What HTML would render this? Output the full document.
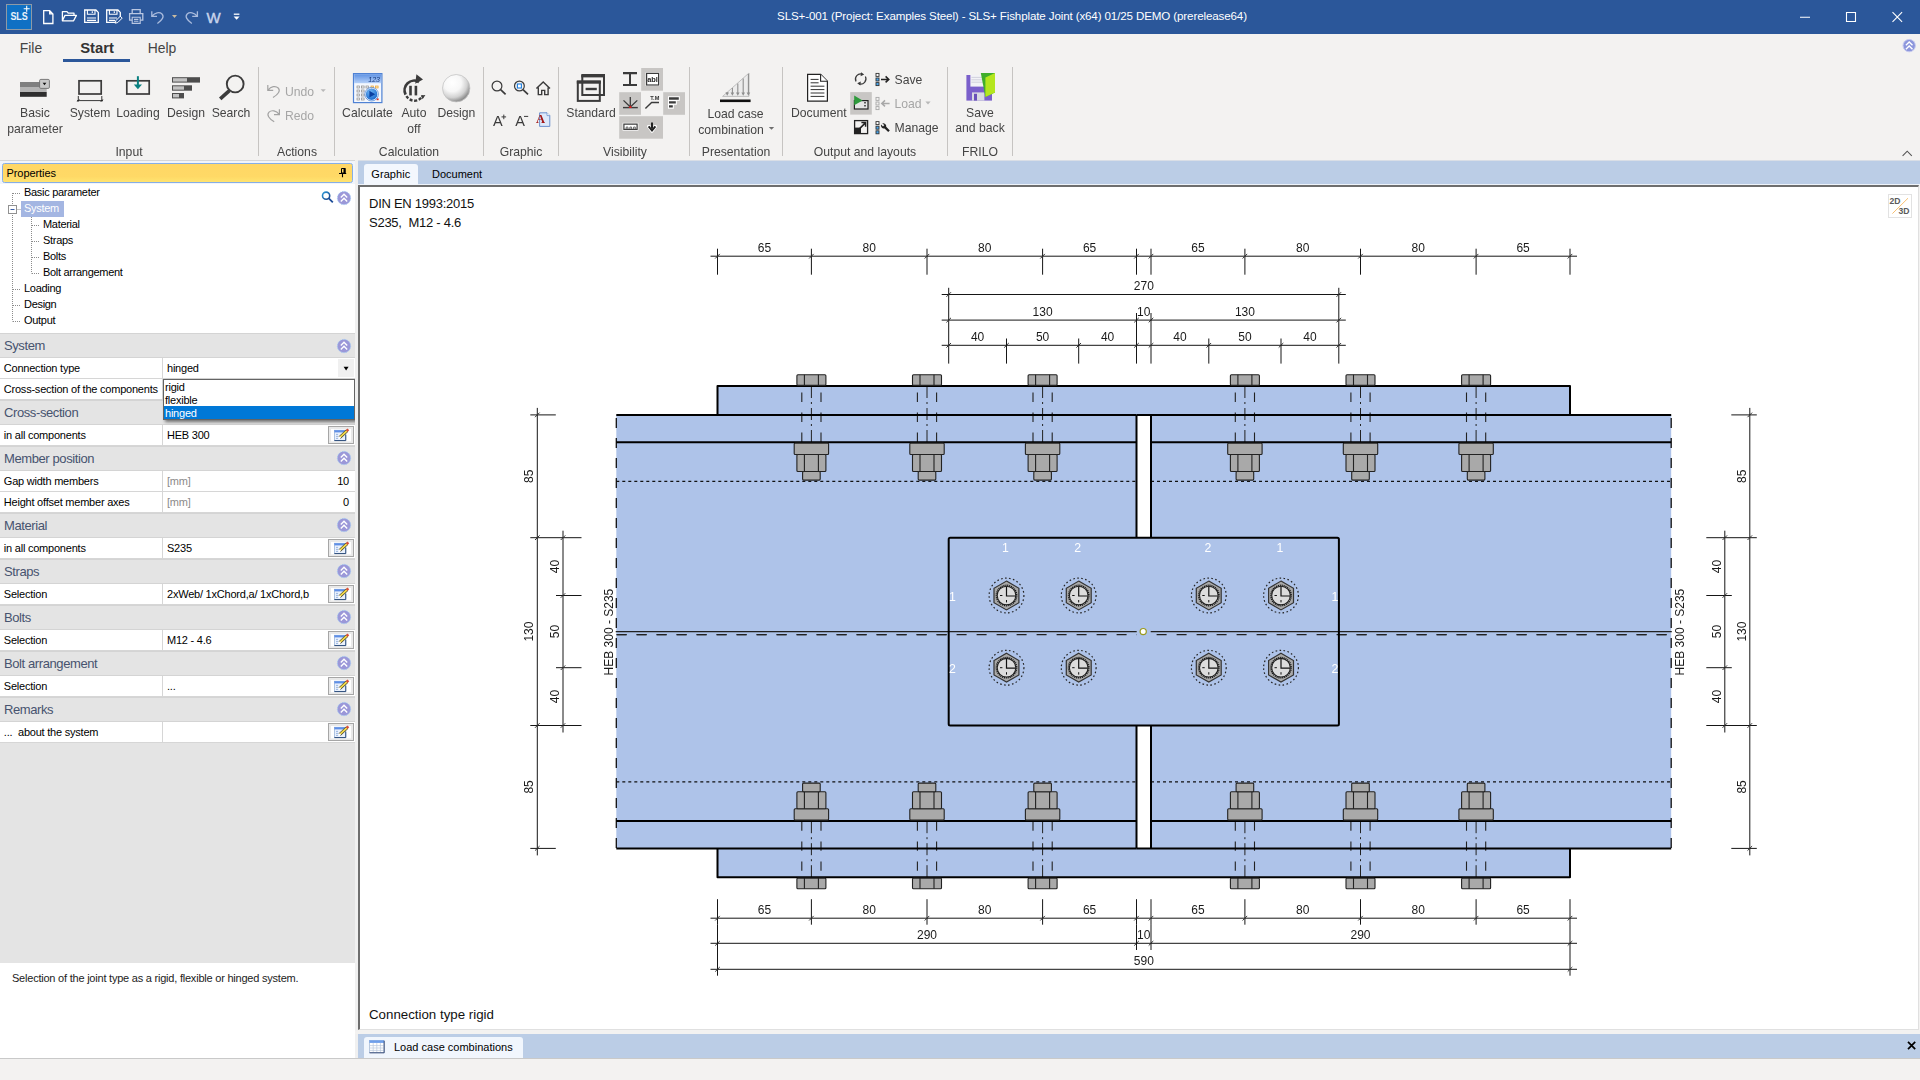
<!DOCTYPE html><html><head><meta charset="utf-8"><title>SLS+ Fishplate Joint</title><style>
*{box-sizing:border-box;margin:0;padding:0}
html,body{width:1920px;height:1080px;overflow:hidden;background:#F3F2F1;font-family:"Liberation Sans",sans-serif;font-size:12px;color:#000}
.abs{position:absolute}
#title{position:absolute;left:0;top:0;width:1920px;height:34px;background:#2B579A}
#title .t{position:absolute;left:0;width:2024px;top:8.5px;text-align:center;color:#fff;font-size:11.6px;letter-spacing:-0.13px;white-space:nowrap}
#ribbon{position:absolute;left:0;top:34px;width:1920px;height:126px;background:#F3F2F1}
.tab{position:absolute;top:4.6px;height:20px;font-size:13.9px;color:#444;text-align:center;white-space:nowrap;line-height:18px}
.lbl{position:absolute;font-size:12.2px;color:#444;text-align:center;white-space:nowrap;line-height:16px;transform:translateX(-50%)}
.glbl{position:absolute;top:110.4px;font-size:12.2px;color:#444;white-space:nowrap;line-height:16px;transform:translateX(-50%)}
.sep{position:absolute;top:33px;width:1px;height:89px;background:#C6C4C2}
.slbl{position:absolute;font-size:12.2px;color:#444;white-space:nowrap;line-height:16px}
.hl{position:absolute;background:#C8C6C4;width:22px;height:23px}
#left{position:absolute;left:0;top:160px;width:355px;height:898px;background:#E4E4E4}
#band{position:absolute;left:358px;top:160px;width:1562px;height:24px;background:#BBCDE6;border-top:1px solid #D9DEE6}
.tree{position:absolute;font-size:11px;line-height:16px;white-space:nowrap;letter-spacing:-0.3px}
.hdr{position:absolute;left:0;width:355px;height:25px;background:#E4E4E4;border-top:1px solid #D4D4D4;border-bottom:1px solid #D4D4D4;font-size:13px;letter-spacing:-0.4px;color:#47536F;line-height:23px;padding-left:4px}
.row{position:absolute;left:0;width:355px;height:21px;background:#fff;border-bottom:1px solid #D6D6D6;font-size:11px;line-height:21px;white-space:nowrap;letter-spacing:-0.22px}
.row .l{position:absolute;left:3.8px;top:0}
.row .v{position:absolute;left:167px;top:0}
.row .u{position:absolute;left:167px;top:0;color:#8A8A8A}
.row .n{position:absolute;right:6px;top:0}
.row .d{position:absolute;left:162px;top:0;width:1px;height:21px;background:#D6D6D6}
.btn{position:absolute;left:328px;top:1.5px;width:26px;height:18px;border:1px solid #A6A6A6;background:#E9E9E9}
</style></head><body>
<div id="title">
<svg class="abs" style="left:0;top:0" width="250" height="34" viewBox="0 0 250 34">
<rect x="6.5" y="4.5" width="25" height="25" fill="#0F70C4" stroke="#8E9AA6" stroke-width="1"/>
<text x="10.4" y="20.4" font-family="Liberation Sans, sans-serif" font-size="10.5" font-weight="bold" fill="#EAF2FA" textLength="17.4" lengthAdjust="spacingAndGlyphs">SLS</text>
<path d="M26.7 5.8v6M23.7 8.8h6" stroke="#fff" stroke-width="1.1"/>
<path d="M43.7 10.7h6l3.2 3.2v9.6h-9.2zM49.7 10.7v3.2h3.2" fill="none" stroke="#fff" stroke-width="1.3"/>
<path d="M62.4 20.8v-9.2h4.6l1.4 1.6h5.6v2.2M62.4 20.8l2.6-5.4h11.4l-2.8 5.4z" fill="none" stroke="#fff" stroke-width="1.3" stroke-linejoin="round"/>
<g fill="none" stroke="#fff" stroke-width="1.3"><path d="M84.7 10h11.2l2.4 2.4v9.9h-13.6z"/><path d="M87.4 10v4.2h7.6v-4.2M92.3 11.2v1.8M87 18h9M87 20.4h9" stroke-width="1.1"/></g>
<g fill="none" stroke="#fff" stroke-width="1.3"><path d="M115.5 22.3h-8.8v-12.3h11.2l2.4 2.4v4.6"/><path d="M109.4 10v4.2h7.6v-4.2M114.3 11.2v1.8M109 18h8M109 20.4h6" stroke-width="1.1"/><path d="M115.2 23.2l0.7-2.6 4.4-4.4 1.9 1.9-4.4 4.4z" stroke-width="1"/></g>
<g fill="none" stroke="#B9C7E2" stroke-width="1.3"><path d="M132.2 13.6v-4h8v4M132.2 20.2h-2.6v-6.6h13.2v6.6h-2.6"/><path d="M132.2 17.2h8v6.2h-8zM134 19.4h4.4M134 21.2h4.4" stroke-width="1.1"/></g>
<path d="M151.8 11.2v5.2h5.2M152 16.2c3-3.6 7.4-4.6 10-2.2c2.6 2.6 0.2 6-4.6 9.6" fill="none" stroke="#A9BBDD" stroke-width="1.3"/>
<path d="M172 15h5l-2.5 3z" fill="#C9BBA0"/>
<path d="M197.4 11.2v5.2h-5.2M197.2 16.2c-3-3.6-7.4-4.6-10-2.2c-2.6 2.6-0.2 6 4.6 9.6" fill="none" stroke="#A9BBDD" stroke-width="1.3"/>
<text x="213.6" y="22.6" font-family="Liberation Sans, sans-serif" font-size="15" fill="#C8D4EC" text-anchor="middle" stroke="#C8D4EC" stroke-width="0.4">W</text>
<path d="M233.8 14.2h5.6" stroke="#fff" stroke-width="1.3"/><path d="M233.6 16.4h6l-3 3.4z" fill="#fff"/>
</svg>
<svg class="abs" style="left:1790px;top:0" width="130" height="34" viewBox="0 0 130 34">
<path d="M10 17.2h10M56.5 12.5h9v9h-9zM102.5 12.2l9.6 9.6M112.1 12.2l-9.6 9.6" fill="none" stroke="#fff" stroke-width="1.1"/>
</svg>
<div class="t">SLS+-001 (Project: Examples Steel) - SLS+ Fishplate Joint (x64) 01/25 DEMO (prerelease64)</div>
</div>
<div id="ribbon">
<div class="tab" style="left:11px;width:40px">File</div>
<div class="tab" style="left:67px;width:60px;font-weight:bold;color:#333;font-size:14.8px">Start</div>
<div class="abs" style="left:63px;top:25px;width:67px;height:3px;background:#2B579A"></div>
<div class="tab" style="left:137px;width:50px">Help</div>
<svg class="abs" style="left:0;top:0;will-change:transform" width="1920" height="126" viewBox="0 34 1920 126">
<!-- highlight boxes -->
<g fill="#C8C6C4"><rect x="641.2" y="68" width="21.8" height="22.7"/><rect x="619.2" y="92.2" width="21.8" height="22.6"/><rect x="663.2" y="92.2" width="21.8" height="22.6"/><rect x="619.2" y="116.2" width="43.8" height="22.5"/><rect x="850.2" y="92.1" width="21.6" height="22.5"/></g>
<!-- Basic parameter -->
<rect x="20" y="82" width="26.7" height="5" fill="#7F7F7F"/><rect x="20" y="87" width="26.7" height="5" fill="#B4B4B4"/><rect x="20" y="92" width="26.7" height="4.8" fill="#2E2E2E"/>
<rect x="39.6" y="79.4" width="9.8" height="9" rx="1.2" fill="#C9C9C9" stroke="#6E6E6E" stroke-width="0.9"/><path d="M42.6 82.8h3.8l-1.9 2.4z" fill="#111"/>
<!-- System -->
<rect x="79" y="80.8" width="22.2" height="13.2" fill="none" stroke="#3B3B3B" stroke-width="1.7"/>
<path d="M77 100.6h26M78.3 96v5.6M101.8 96v5.6" stroke="#222" stroke-width="0.9" fill="none"/><path d="M77.2 101.6l2.2-2.2M100.7 101.6l2.2-2.2" stroke="#222" stroke-width="0.9"/>
<!-- Loading -->
<rect x="126.8" y="80.8" width="22.4" height="13.2" fill="none" stroke="#3B3B3B" stroke-width="1.7"/>
<path d="M137.9 76.2v9" stroke="#0A8080" stroke-width="2"/><path d="M133.8 84.6h8.2l-4.1 4.6z" fill="#0A8080"/>
<!-- Design bars -->
<rect x="172" y="77.2" width="28" height="5.4" fill="#4D4D4D"/><rect x="173" y="78.2" width="14" height="3.4" fill="#C2C2C2"/>
<rect x="172" y="85.3" width="20" height="5.4" fill="#4D4D4D"/><rect x="173" y="86.3" width="11" height="3.4" fill="#C2C2C2"/>
<rect x="172" y="93" width="12" height="5.4" fill="#4D4D4D"/><rect x="173" y="94" width="6" height="3.4" fill="#C2C2C2"/>
<!-- Search -->
<circle cx="235.2" cy="84" r="8.4" fill="none" stroke="#3B3B3B" stroke-width="1.9"/><path d="M229.4 90.6l-9.2 8.2" stroke="#3B3B3B" stroke-width="3.6"/>
<!-- Undo / Redo (disabled) -->
<g fill="none" stroke="#A3A3A3" stroke-width="1.2"><path d="M267.8 85v5.4h5.4M268 90.2c3-3.8 7.6-4.8 10.2-2.2c2.6 2.6 0.2 6.2-5.2 9.6"/><path d="M279.4 109.2v5.4h-5.4M279.2 114.4c-3-3.8-7.6-4.8-10.2-2.2c-2.6 2.6-0.2 6.2 5.2 9.6"/></g>
<path d="M320.6 89.3h5.2l-2.6 2.8z" fill="#B8B8B8"/>
<!-- Calculate -->
<defs><linearGradient id="gc" x1="0" y1="0" x2="0" y2="1"><stop offset="0" stop-color="#5F93E4"/><stop offset="1" stop-color="#B5D0F8"/></linearGradient>
<radialGradient id="gb" cx="0.36" cy="0.3" r="0.72"><stop offset="0" stop-color="#FFFFFF"/><stop offset="0.45" stop-color="#F7F7F7"/><stop offset="0.75" stop-color="#D2D2D2"/><stop offset="1" stop-color="#868686"/></radialGradient>
<radialGradient id="gp" cx="0.4" cy="0.3" r="0.8"><stop offset="0" stop-color="#6DB4F4"/><stop offset="1" stop-color="#0E5FC8"/></radialGradient></defs>
<rect x="353.5" y="73.6" width="28.4" height="29" fill="#F4F8FE" stroke="#4F82D4" stroke-width="1.2"/>
<rect x="354.2" y="74.2" width="27" height="9" fill="url(#gc)"/>
<text x="380" y="82" font-family="Liberation Sans, sans-serif" font-size="7" font-style="italic" fill="#14387C" text-anchor="end">123</text>
<g fill="#F8F8F8" stroke="#8C8C8C" stroke-width="0.7"><rect x="357" y="86" width="2.6" height="2"/><rect x="361.5" y="86" width="2.6" height="2"/><rect x="366" y="86" width="2.6" height="2"/><rect x="357" y="90" width="2.6" height="2"/><rect x="361.5" y="90" width="2.6" height="2"/><rect x="357" y="94" width="2.6" height="2"/><rect x="361.5" y="94" width="2.6" height="2"/><rect x="357" y="98" width="2.6" height="2"/><rect x="361.5" y="98" width="2.6" height="2"/></g>
<g fill="#FFE9B0" stroke="#E8A030" stroke-width="0.7"><rect x="371" y="86" width="2.6" height="2"/><rect x="375.5" y="86" width="2.6" height="2"/></g><rect x="376.6" y="98.4" width="2" height="1.8" fill="#E0341C"/>
<circle cx="371.6" cy="94.2" r="6.2" fill="url(#gp)" stroke="#EAF2FE" stroke-width="1"/><circle cx="371.6" cy="94.2" r="6.8" fill="none" stroke="#2A6AC8" stroke-width="0.6"/><path d="M369.4 90.8v6.8l5.8-3.4z" fill="#0A3FA0"/>
<!-- Auto off -->
<path d="M405.6 94.6a9.6 9.6 0 0 1 13.4 -12.6" fill="none" stroke="#3B3B3B" stroke-width="2.7"/><path d="M416.4 74.2l6.6 5.4l-7.8 4.2z" fill="#3B3B3B"/>
<path d="M406.4 96.2a9.6 9.6 0 0 0 16.6 -0.6" fill="none" stroke="#3B3B3B" stroke-width="2.4" stroke-dasharray="3 1.6"/><path d="M420.8 95.6l4.6-0.6l-2.8 4.2z" fill="#3B3B3B"/>
<rect x="409.2" y="85.8" width="2.6" height="9.6" fill="#3B3B3B"/><rect x="414.6" y="85.8" width="2.6" height="9.6" fill="#3B3B3B"/>
<!-- Design ball -->
<circle cx="456.2" cy="88.2" r="13.7" fill="url(#gb)" stroke="#C4C4C4" stroke-width="0.8"/>
<!-- Graphic small -->
<g fill="none" stroke="#3B3B3B" stroke-width="1.2"><circle cx="497" cy="86" r="4.9"/><path d="M500.6 89.6l5 4.8" stroke-width="1.7"/><circle cx="519.4" cy="86" r="4.9"/><path d="M523 89.6l5 4.8" stroke-width="1.7"/>
<path d="M536.4 88.6l6.8-6.6l6.8 6.6M538.3 87.4v7.2h3.4v-4.2h3v4.2h3.4v-7.2" stroke-width="1.4"/></g>
<rect x="517.4" y="84" width="4" height="4" fill="#fff" stroke="#1E7FE0" stroke-width="1.1"/>
<text x="493" y="125.6" font-family="Liberation Sans, sans-serif" font-size="14.5" fill="#3B3B3B">A</text><path d="M503.8 114.6v4.6M501.5 116.9h4.6" stroke="#3B3B3B" stroke-width="1"/>
<text x="515.2" y="125.6" font-family="Liberation Sans, sans-serif" font-size="14.5" fill="#3B3B3B">A</text><path d="M524 116.4h4.2" stroke="#3B3B3B" stroke-width="1"/>
<path d="M539.6 112.8h7.4l2.8 2.8v10.8h-10.2z" fill="#DCE8FA" stroke="#5F86C8" stroke-width="0.9"/><path d="M547 112.8v2.8h2.8" fill="#fff" stroke="#5F86C8" stroke-width="0.7"/>
<text x="536" y="123" font-family="Liberation Serif, serif" font-size="12.5" font-weight="bold" fill="#A31515">A</text>
<!-- Standard -->
<g fill="none" stroke="#3B3B3B"><path d="M582.3 75v20h21.7v-20" stroke-width="2"/><path d="M581.3 75.7h23.7" stroke-width="3.4"/>
<rect x="577.8" y="82" width="22" height="18.9" stroke-width="2"/><path d="M576.8 82h24" stroke-width="3.4"/><path d="M585.6 89h11.2" stroke-width="2.4"/></g>
<!-- Visibility small -->
<g stroke="#3B3B3B" fill="none"><path d="M623 73.1h14M623 85h14" stroke-width="2.1"/><path d="M630 73v12" stroke-width="2"/>
<rect x="645.6" y="72.4" width="14" height="13.6" fill="#fff" stroke="none"/>
<rect x="646.6" y="73.4" width="12" height="11.6" stroke-width="1.2" fill="#fff"/>
<path d="M623 107.6h14.8" stroke-width="1.4"/><path d="M630.3 107v-10M630.3 107l-6.8-6.6M630.3 107l7-6.6" stroke-width="1.3"/>
<path d="M645.4 108.6l6.2-6.1h7.4" stroke-width="1.4"/>
<rect x="622.6" y="122.8" width="15.8" height="7.8" fill="#fff" stroke="none"/>
<path d="M623.9 124.1h13.2v5.2h-13.2z" stroke-width="1.2" fill="#fff"/><path d="M626.2 129v-2h1.7v2M629.9 129v-2h1.7v2M633.6 129v-2h1.7v2" stroke-width="0.7"/>
</g>
<path d="M628.6 107.9l1.7-2.6l1.7 2.6z" fill="#D81E1E"/>
<text x="652.6" y="82.3" font-family="Liberation Sans, sans-serif" font-size="7.4" font-weight="bold" fill="#222" text-anchor="middle">abl</text>
<text x="654.8" y="100.2" font-family="Liberation Sans, sans-serif" font-size="5.6" font-weight="bold" fill="#333" text-anchor="middle">T.M</text>
<path d="M668 96.3h11.8v4.4h-3v4h-3v4h-5.8z" fill="#fff"/>
<path d="M669 97.3h9.8v2.4h-9.8zM669 101.3h6.8v2.3h-6.8zM669 105.3h3.8v2.3h-3.8z" fill="#3B3B3B"/>
<path d="M652 122.2v6M648.4 126.4l3.6 5l3.6-5z" stroke="#fff" stroke-width="2.8" fill="#fff" stroke-linejoin="round"/><path d="M652 122.4v6.4" stroke="#222" stroke-width="2.3"/><path d="M648.6 126.4l3.4 4.2l3.4-4.2" fill="none" stroke="#222" stroke-width="1.9"/>
<!-- Load case combination -->
<path d="M722.6 96.4l26.4-23.4v23.4z" fill="#ECECEC" stroke="#B9B9B9" stroke-width="0.9"/>
<g stroke="#8E8E8E" stroke-width="1.1"><path d="M727.2 93v-1M732.4 93v-5M737.8 93v-9.6M743.2 93v-14.4M748.4 93v-19"/></g>
<g fill="#8E8E8E"><path d="M725.4 92.4h3.6l-1.8 3.4zM730.6 92.4h3.6l-1.8 3.4zM736 92.4h3.6l-1.8 3.4zM741.4 92.4h3.6l-1.8 3.4zM746.6 92.4h3.6l-1.8 3.4z"/></g>
<path d="M720 100.8h30.6" stroke="#111" stroke-width="2.6"/>
<path d="M768.8 127h5.4l-2.7 2.8z" fill="#6E6E6E"/>
<!-- Document -->
<path d="M807.6 74.4h13l6.8 6.8v20h-19.8z" fill="#fff" stroke="#222" stroke-width="1.2"/><path d="M820.6 74.4v6.8h6.8" fill="#fff" stroke="#222" stroke-width="1.1"/>
<path d="M810.6 79.4h8M810.6 82.8h8M810.6 86.2h13.8M810.6 89.6h13.8M810.6 93h13.8M810.6 96.4h13.8" stroke="#333" stroke-width="1"/>
<!-- output small icons -->
<g fill="none" stroke="#3B3B3B" stroke-width="1.2"><path d="M856 81.4a5.2 5.2 0 0 1 6.4-7.2M865.4 76.6a5.2 5.2 0 0 1-6.4 7.2"/></g><path d="M861 72.2l3.2 2.4l-3.6 1.6zM860.4 85.6l-3.2-2.4l3.6-1.6z" fill="#3B3B3B"/>
<rect x="854.4" y="100.6" width="13.6" height="8.4" fill="#E4E4E4" stroke="#222" stroke-width="1.2"/><path d="M865 102v1.4M865 105v1.4" stroke="#222" stroke-width="1.4"/><path d="M854.2 95.6v9.6l8.4-4.8z" fill="#2E9A3C"/>
<rect x="854.6" y="120.6" width="13" height="13" fill="none" stroke="#222" stroke-width="1.3"/><rect x="854.6" y="127.6" width="6.4" height="6" fill="#222"/><path d="M859.6 128.6l6-6M861.4 122.6h4.2v4.2" fill="none" stroke="#222" stroke-width="1.5"/>
<g stroke="#333" stroke-width="0.9"><rect x="876" y="73.4" width="3" height="3" fill="#fff"/><rect x="876" y="78" width="3" height="3" fill="#49A8F0"/><rect x="876" y="82.6" width="3" height="3" fill="#49A8F0"/>
<rect x="876" y="121.6" width="3" height="3" fill="#fff"/><rect x="876" y="126.2" width="3" height="3" fill="#49A8F0"/><rect x="876" y="130.8" width="3" height="3" fill="#49A8F0"/></g>
<g stroke="#A8A8A8" stroke-width="0.9" fill="#F3F2F1"><rect x="876" y="97.4" width="3" height="3"/><rect x="876" y="102" width="3" height="3"/><rect x="876" y="106.6" width="3" height="3"/></g>
<path d="M881 79.4h7.6M885.6 76.4l3.2 3l-3.2 3" fill="none" stroke="#222" stroke-width="1.5"/>
<path d="M882 103.4h7.6M885 100.4l-3.2 3l3.2 3" fill="none" stroke="#A8A8A8" stroke-width="1.5"/>
<path d="M925.4 101.6h5.2l-2.6 2.8z" fill="#B8B8B8"/>
<path d="M882.2 123.4a3 3 0 0 1 4 3.4l3.6 3.6l-1.6 1.6l-3.6-3.6a3 3 0 0 1-3.6-3.8l2 1.8l1.4-1.4z" fill="#222"/>
<!-- Save and back -->
<path d="M966.4 75h25.6v25.6h-25.6z" fill="#7A5FCB"/><rect x="970.4" y="75" width="16" height="11.6" fill="#F2F2F6"/><path d="M971.4 77.4h14M971.4 79.8h14M971.4 82.2h14" stroke="#C9C9D6" stroke-width="0.8"/>
<rect x="972" y="92.4" width="12.4" height="8.2" fill="#D9D9E2"/><rect x="974" y="93.8" width="3" height="6.8" fill="#6A50B8"/>
<path d="M980.8 73h14.2v19.4l-9.6 4.6z" fill="#3FAE2A"/><path d="M985.4 77.4l9.6-4.4v19.4l-9.6 4.6z" fill="#B4E61E"/>
<!-- collapse caret / help -->
<path d="M1902.6 155.8l4.6-4.6l4.6 4.6" fill="none" stroke="#555" stroke-width="1.1"/>
<circle cx="1909.2" cy="45.6" r="6.2" fill="#8C96DC" stroke="#C4C8EE" stroke-width="1"/><path d="M1905.9 45.2l3.3-3.3l3.3 3.3M1905.9 49.2l3.3-3.3l3.3 3.3" fill="none" stroke="#fff" stroke-width="1.4"/>
</svg>
<div class="lbl" style="left:35px;top:71px;color:#444">Basic</div>
<div class="lbl" style="left:35px;top:86.5px;color:#444">parameter</div>
<div class="lbl" style="left:90px;top:71px;color:#444">System</div>
<div class="lbl" style="left:138px;top:71px;color:#444">Loading</div>
<div class="lbl" style="left:186px;top:71px;color:#444">Design</div>
<div class="lbl" style="left:231px;top:71px;color:#444">Search</div>
<div class="lbl" style="left:367.5px;top:71px;color:#444">Calculate</div>
<div class="lbl" style="left:414px;top:71px;color:#444">Auto</div>
<div class="lbl" style="left:414px;top:86.5px;color:#444">off</div>
<div class="lbl" style="left:456.4px;top:71px;color:#444">Design</div>
<div class="lbl" style="left:591px;top:71px;color:#444">Standard</div>
<div class="lbl" style="left:735.5px;top:71.6px;color:#444">Load case</div>
<div class="lbl" style="left:731px;top:87.5px;color:#444">combination</div>
<div class="lbl" style="left:818.8px;top:70.8px;color:#444">Document</div>
<div class="lbl" style="left:980px;top:70.5px;color:#444">Save</div>
<div class="lbl" style="left:980px;top:86.3px;color:#444">and back</div>
<div class="glbl" style="left:129px">Input</div>
<div class="glbl" style="left:297px">Actions</div>
<div class="glbl" style="left:409px">Calculation</div>
<div class="glbl" style="left:521px">Graphic</div>
<div class="glbl" style="left:625px">Visibility</div>
<div class="glbl" style="left:736px">Presentation</div>
<div class="glbl" style="left:865px">Output and layouts</div>
<div class="glbl" style="left:980px">FRILO</div>
<div class="sep" style="left:258px"></div>
<div class="sep" style="left:334px"></div>
<div class="sep" style="left:483px"></div>
<div class="sep" style="left:558px"></div>
<div class="sep" style="left:689px"></div>
<div class="sep" style="left:782px"></div>
<div class="sep" style="left:947px"></div>
<div class="sep" style="left:1012px"></div>
<div class="slbl" style="left:285px;top:49.7px;color:#A6A6A6">Undo</div>
<div class="slbl" style="left:285px;top:73.5px;color:#A6A6A6">Redo</div>
<div class="slbl" style="left:894.5px;top:37.5px">Save</div>
<div class="slbl" style="left:894.5px;top:61.8px;color:#A6A6A6">Load</div>
<div class="slbl" style="left:894.5px;top:85.8px">Manage</div>
</div>
<div id="left">
<div class="abs" style="left:0;top:0;width:355px;height:24px;background:#F1F5FB;border-top:1px solid #D6D6D6"></div>
<div class="abs" style="left:2px;top:3px;width:351px;height:20px;background:linear-gradient(#FFD765,#FFD966 70%,#FFE470);border:1px solid #86AEE6;border-radius:2.5px;font-size:11px;line-height:18px;padding-left:3.5px;letter-spacing:-0.07px">Properties</div>
<div class="abs" style="left:0;top:24px;width:355px;height:149px;background:#fff"></div>
<svg class="abs" style="left:0;top:0" width="355" height="180" viewBox="0 160 355 180"><path d="M12.5 193V321.5" stroke="#8C8C8C" stroke-width="1" stroke-dasharray="1 1" fill="none"/><path d="M13 193.5H21" stroke="#8C8C8C" stroke-width="1" stroke-dasharray="1 1" fill="none"/><path d="M13 289.5H21" stroke="#8C8C8C" stroke-width="1" stroke-dasharray="1 1" fill="none"/><path d="M13 305.5H21" stroke="#8C8C8C" stroke-width="1" stroke-dasharray="1 1" fill="none"/><path d="M13 321.5H21" stroke="#8C8C8C" stroke-width="1" stroke-dasharray="1 1" fill="none"/><path d="M16.5 209.5H21" stroke="#8C8C8C" stroke-width="1" stroke-dasharray="1 1" fill="none"/><path d="M31.5 217V273.5" stroke="#8C8C8C" stroke-width="1" stroke-dasharray="1 1" fill="none"/><path d="M32 225.5H40" stroke="#8C8C8C" stroke-width="1" stroke-dasharray="1 1" fill="none"/><path d="M32 241.5H40" stroke="#8C8C8C" stroke-width="1" stroke-dasharray="1 1" fill="none"/><path d="M32 257.5H40" stroke="#8C8C8C" stroke-width="1" stroke-dasharray="1 1" fill="none"/><path d="M32 273.5H40" stroke="#8C8C8C" stroke-width="1" stroke-dasharray="1 1" fill="none"/><rect x="8.5" y="205.5" width="8" height="8" fill="#fff" stroke="#919191" stroke-width="1"/><path d="M10.5 209.5h4" stroke="#3A5FA8" stroke-width="1"/></svg>
<div class="tree" style="left:24px;top:24px">Basic parameter</div>
<div class="abs" style="left:21px;top:41.3px;width:42.7px;height:15.4px;background:#A4B6E2"></div>
<div class="tree" style="left:24px;top:40px;color:#fff">System</div>
<div class="tree" style="left:43px;top:56px">Material</div>
<div class="tree" style="left:43px;top:72px">Straps</div>
<div class="tree" style="left:43px;top:88px">Bolts</div>
<div class="tree" style="left:43px;top:104px">Bolt arrangement</div>
<div class="tree" style="left:24px;top:120px">Loading</div>
<div class="tree" style="left:24px;top:136px">Design</div>
<div class="tree" style="left:24px;top:152px">Output</div>
<svg class="abs" style="left:300px;top:0" width="55" height="50" viewBox="300 160 55 50">
<path d="M341.5 168.5h3.5v4.5h-3.5z" fill="none" stroke="#000" stroke-width="1"/><path d="M344.5 168v5" stroke="#000" stroke-width="2"/><path d="M339 173.5h7.2M342.5 174v3.2" stroke="#000" stroke-width="1.1"/>
<defs><linearGradient id="gs" x1="0" y1="0" x2="1" y2="1"><stop offset="0" stop-color="#2E9AD8"/><stop offset="1" stop-color="#173F86"/></linearGradient></defs>
<circle cx="326.1" cy="195.7" r="3.6" fill="#fff" stroke="url(#gs)" stroke-width="1.6"/><path d="M328.8 198.4l4 4" stroke="#1C4C98" stroke-width="1.8"/>
</svg>
<svg class="abs" style="left:336px;top:30px" width="16" height="16" viewBox="-8 -8 16 16"><circle r="6.6" fill="#9B97D8" stroke="#9CC2F2" stroke-width="1" stroke-dasharray="1.4 1"/><path d="M-3.2 -0.5L0 -3.7L3.2 -0.5M-3.2 3.5L0 0.3L3.2 3.5" fill="none" stroke="#fff" stroke-width="1.4"/></svg>
<div class="hdr" style="top:173px">System</div>
<svg class="abs" style="left:336px;top:177.5px" width="16" height="16" viewBox="-8 -8 16 16"><circle r="6.6" fill="#9B97D8" stroke="#9CC2F2" stroke-width="1" stroke-dasharray="1.4 1"/><path d="M-3.2 -0.5L0 -3.7L3.2 -0.5M-3.2 3.5L0 0.3L3.2 3.5" fill="none" stroke="#fff" stroke-width="1.4"/></svg>
<div class="row" style="top:198px"><span class="l">Connection type</span><span class="d"></span><span class="v">hinged</span></div>
<div class="row" style="top:219px"><span class="l">Cross-section of the components</span><span class="d"></span><span class="v"></span></div>
<div class="hdr" style="top:239.5px">Cross-section</div>
<svg class="abs" style="left:336px;top:244.0px" width="16" height="16" viewBox="-8 -8 16 16"><circle r="6.6" fill="#9B97D8" stroke="#9CC2F2" stroke-width="1" stroke-dasharray="1.4 1"/><path d="M-3.2 -0.5L0 -3.7L3.2 -0.5M-3.2 3.5L0 0.3L3.2 3.5" fill="none" stroke="#fff" stroke-width="1.4"/></svg>
<div class="row" style="top:264.5px"><span class="l">in all components</span><span class="d"></span><span class="v">HEB 300</span><span class="btn"><svg style="position:absolute;left:0;top:0" width="24" height="16" viewBox="329 427 24 16"><rect x="329" y="427" width="24" height="16" fill="#E9E9E9"/><rect x="331" y="429" width="20" height="12.4" fill="#fff"/><rect x="334.4" y="430.2" width="11.2" height="10.4" fill="#EAF1FC" stroke="#7F9FD0" stroke-width="0.6"/><rect x="334.4" y="430.2" width="11.2" height="2.2" fill="#5F8FE6"/><path d="M334.4 440.6h11.4v-6" fill="none" stroke="#2B4A78" stroke-width="1"/><path d="M336 434.4h2M336 436.4h2M336 438.4h2" stroke="#86A6DA" stroke-width="0.8"/><path d="M339.6 437.6l7.6-7" stroke="#3A3A2A" stroke-width="3"/><path d="M339.8 437.4l7.2-6.6" stroke="#F2D84A" stroke-width="1.9"/><path d="M346.6 431l1.8-1.6" stroke="#D8503A" stroke-width="2.6"/><path d="M339 438.4l1.4-1.6" stroke="#fff" stroke-width="1.6"/></svg></span></div>
<div class="hdr" style="top:285.5px">Member position</div>
<svg class="abs" style="left:336px;top:290.0px" width="16" height="16" viewBox="-8 -8 16 16"><circle r="6.6" fill="#9B97D8" stroke="#9CC2F2" stroke-width="1" stroke-dasharray="1.4 1"/><path d="M-3.2 -0.5L0 -3.7L3.2 -0.5M-3.2 3.5L0 0.3L3.2 3.5" fill="none" stroke="#fff" stroke-width="1.4"/></svg>
<div class="row" style="top:310.5px"><span class="l">Gap width members</span><span class="d"></span><span class="u">[mm]</span><span class="n">10</span></div>
<div class="row" style="top:331.5px"><span class="l">Height offset member axes</span><span class="d"></span><span class="u">[mm]</span><span class="n">0</span></div>
<div class="hdr" style="top:352.5px">Material</div>
<svg class="abs" style="left:336px;top:357.0px" width="16" height="16" viewBox="-8 -8 16 16"><circle r="6.6" fill="#9B97D8" stroke="#9CC2F2" stroke-width="1" stroke-dasharray="1.4 1"/><path d="M-3.2 -0.5L0 -3.7L3.2 -0.5M-3.2 3.5L0 0.3L3.2 3.5" fill="none" stroke="#fff" stroke-width="1.4"/></svg>
<div class="row" style="top:377.5px"><span class="l">in all components</span><span class="d"></span><span class="v">S235</span><span class="btn"><svg style="position:absolute;left:0;top:0" width="24" height="16" viewBox="329 427 24 16"><rect x="329" y="427" width="24" height="16" fill="#E9E9E9"/><rect x="331" y="429" width="20" height="12.4" fill="#fff"/><rect x="334.4" y="430.2" width="11.2" height="10.4" fill="#EAF1FC" stroke="#7F9FD0" stroke-width="0.6"/><rect x="334.4" y="430.2" width="11.2" height="2.2" fill="#5F8FE6"/><path d="M334.4 440.6h11.4v-6" fill="none" stroke="#2B4A78" stroke-width="1"/><path d="M336 434.4h2M336 436.4h2M336 438.4h2" stroke="#86A6DA" stroke-width="0.8"/><path d="M339.6 437.6l7.6-7" stroke="#3A3A2A" stroke-width="3"/><path d="M339.8 437.4l7.2-6.6" stroke="#F2D84A" stroke-width="1.9"/><path d="M346.6 431l1.8-1.6" stroke="#D8503A" stroke-width="2.6"/><path d="M339 438.4l1.4-1.6" stroke="#fff" stroke-width="1.6"/></svg></span></div>
<div class="hdr" style="top:398.5px">Straps</div>
<svg class="abs" style="left:336px;top:403.0px" width="16" height="16" viewBox="-8 -8 16 16"><circle r="6.6" fill="#9B97D8" stroke="#9CC2F2" stroke-width="1" stroke-dasharray="1.4 1"/><path d="M-3.2 -0.5L0 -3.7L3.2 -0.5M-3.2 3.5L0 0.3L3.2 3.5" fill="none" stroke="#fff" stroke-width="1.4"/></svg>
<div class="row" style="top:423.5px"><span class="l">Selection</span><span class="d"></span><span class="v">2xWeb/ 1xChord,a/ 1xChord,b</span><span class="btn"><svg style="position:absolute;left:0;top:0" width="24" height="16" viewBox="329 427 24 16"><rect x="329" y="427" width="24" height="16" fill="#E9E9E9"/><rect x="331" y="429" width="20" height="12.4" fill="#fff"/><rect x="334.4" y="430.2" width="11.2" height="10.4" fill="#EAF1FC" stroke="#7F9FD0" stroke-width="0.6"/><rect x="334.4" y="430.2" width="11.2" height="2.2" fill="#5F8FE6"/><path d="M334.4 440.6h11.4v-6" fill="none" stroke="#2B4A78" stroke-width="1"/><path d="M336 434.4h2M336 436.4h2M336 438.4h2" stroke="#86A6DA" stroke-width="0.8"/><path d="M339.6 437.6l7.6-7" stroke="#3A3A2A" stroke-width="3"/><path d="M339.8 437.4l7.2-6.6" stroke="#F2D84A" stroke-width="1.9"/><path d="M346.6 431l1.8-1.6" stroke="#D8503A" stroke-width="2.6"/><path d="M339 438.4l1.4-1.6" stroke="#fff" stroke-width="1.6"/></svg></span></div>
<div class="hdr" style="top:444.5px">Bolts</div>
<svg class="abs" style="left:336px;top:449.0px" width="16" height="16" viewBox="-8 -8 16 16"><circle r="6.6" fill="#9B97D8" stroke="#9CC2F2" stroke-width="1" stroke-dasharray="1.4 1"/><path d="M-3.2 -0.5L0 -3.7L3.2 -0.5M-3.2 3.5L0 0.3L3.2 3.5" fill="none" stroke="#fff" stroke-width="1.4"/></svg>
<div class="row" style="top:469.5px"><span class="l">Selection</span><span class="d"></span><span class="v">M12 - 4.6</span><span class="btn"><svg style="position:absolute;left:0;top:0" width="24" height="16" viewBox="329 427 24 16"><rect x="329" y="427" width="24" height="16" fill="#E9E9E9"/><rect x="331" y="429" width="20" height="12.4" fill="#fff"/><rect x="334.4" y="430.2" width="11.2" height="10.4" fill="#EAF1FC" stroke="#7F9FD0" stroke-width="0.6"/><rect x="334.4" y="430.2" width="11.2" height="2.2" fill="#5F8FE6"/><path d="M334.4 440.6h11.4v-6" fill="none" stroke="#2B4A78" stroke-width="1"/><path d="M336 434.4h2M336 436.4h2M336 438.4h2" stroke="#86A6DA" stroke-width="0.8"/><path d="M339.6 437.6l7.6-7" stroke="#3A3A2A" stroke-width="3"/><path d="M339.8 437.4l7.2-6.6" stroke="#F2D84A" stroke-width="1.9"/><path d="M346.6 431l1.8-1.6" stroke="#D8503A" stroke-width="2.6"/><path d="M339 438.4l1.4-1.6" stroke="#fff" stroke-width="1.6"/></svg></span></div>
<div class="hdr" style="top:490.5px">Bolt arrangement</div>
<svg class="abs" style="left:336px;top:495.0px" width="16" height="16" viewBox="-8 -8 16 16"><circle r="6.6" fill="#9B97D8" stroke="#9CC2F2" stroke-width="1" stroke-dasharray="1.4 1"/><path d="M-3.2 -0.5L0 -3.7L3.2 -0.5M-3.2 3.5L0 0.3L3.2 3.5" fill="none" stroke="#fff" stroke-width="1.4"/></svg>
<div class="row" style="top:515.5px"><span class="l">Selection</span><span class="d"></span><span class="v">...</span><span class="btn"><svg style="position:absolute;left:0;top:0" width="24" height="16" viewBox="329 427 24 16"><rect x="329" y="427" width="24" height="16" fill="#E9E9E9"/><rect x="331" y="429" width="20" height="12.4" fill="#fff"/><rect x="334.4" y="430.2" width="11.2" height="10.4" fill="#EAF1FC" stroke="#7F9FD0" stroke-width="0.6"/><rect x="334.4" y="430.2" width="11.2" height="2.2" fill="#5F8FE6"/><path d="M334.4 440.6h11.4v-6" fill="none" stroke="#2B4A78" stroke-width="1"/><path d="M336 434.4h2M336 436.4h2M336 438.4h2" stroke="#86A6DA" stroke-width="0.8"/><path d="M339.6 437.6l7.6-7" stroke="#3A3A2A" stroke-width="3"/><path d="M339.8 437.4l7.2-6.6" stroke="#F2D84A" stroke-width="1.9"/><path d="M346.6 431l1.8-1.6" stroke="#D8503A" stroke-width="2.6"/><path d="M339 438.4l1.4-1.6" stroke="#fff" stroke-width="1.6"/></svg></span></div>
<div class="hdr" style="top:536.5px">Remarks</div>
<svg class="abs" style="left:336px;top:541.0px" width="16" height="16" viewBox="-8 -8 16 16"><circle r="6.6" fill="#9B97D8" stroke="#9CC2F2" stroke-width="1" stroke-dasharray="1.4 1"/><path d="M-3.2 -0.5L0 -3.7L3.2 -0.5M-3.2 3.5L0 0.3L3.2 3.5" fill="none" stroke="#fff" stroke-width="1.4"/></svg>
<div class="row" style="top:561.5px"><span class="l">...&nbsp; about the system</span><span class="d"></span><span class="v"></span><span class="btn"><svg style="position:absolute;left:0;top:0" width="24" height="16" viewBox="329 427 24 16"><rect x="329" y="427" width="24" height="16" fill="#E9E9E9"/><rect x="331" y="429" width="20" height="12.4" fill="#fff"/><rect x="334.4" y="430.2" width="11.2" height="10.4" fill="#EAF1FC" stroke="#7F9FD0" stroke-width="0.6"/><rect x="334.4" y="430.2" width="11.2" height="2.2" fill="#5F8FE6"/><path d="M334.4 440.6h11.4v-6" fill="none" stroke="#2B4A78" stroke-width="1"/><path d="M336 434.4h2M336 436.4h2M336 438.4h2" stroke="#86A6DA" stroke-width="0.8"/><path d="M339.6 437.6l7.6-7" stroke="#3A3A2A" stroke-width="3"/><path d="M339.8 437.4l7.2-6.6" stroke="#F2D84A" stroke-width="1.9"/><path d="M346.6 431l1.8-1.6" stroke="#D8503A" stroke-width="2.6"/><path d="M339 438.4l1.4-1.6" stroke="#fff" stroke-width="1.6"/></svg></span></div>
<div class="abs" style="left:338px;top:199px;width:16px;height:18px;background:#F0F0F0"></div>
<svg class="abs" style="left:342px;top:206px" width="8" height="6"><path d="M1.6 0.8H6.6L4.1 4.6Z" fill="#000"/></svg>
<div class="abs" style="left:163px;top:219px;width:192px;height:41px;background:#fff;border:1px solid #646464;box-shadow:2px 2px 3px rgba(0,0,0,.5);font-size:11px;line-height:13px;letter-spacing:-0.22px"><div style="padding-left:1px;height:13px;padding-top:0.7px">rigid</div><div style="padding-left:1px;height:13px;padding-top:0.7px">flexible</div><div style="padding-left:1px;height:13px;padding-top:0.7px;background:#0078D7;color:#fff">hinged</div></div>
<div class="abs" style="left:0;top:803px;width:355px;height:95px;background:#fff"></div>
<div class="abs" style="left:12px;top:811.7px;font-size:11px;letter-spacing:-0.22px;color:#222;white-space:nowrap">Selection of the joint type as a rigid, flexible or hinged system.</div>
</div>
<div class="abs" style="left:355px;top:160px;width:3px;height:898px;background:#F0F0F0"></div>
<div class="abs" style="left:358px;top:184px;width:1562px;height:1px;background:#EEF3FA"></div>
<div id="band"></div>
<div class="abs" style="left:363.6px;top:164px;width:54.4px;height:20.6px;background:#F3F7FD;border-radius:3px 3px 0 0;font-size:11px;line-height:20.8px;text-align:center;letter-spacing:0.08px">Graphic</div>
<div class="abs" style="left:432px;top:164px;font-size:11px;line-height:20.8px">Document</div>
<div class="abs" style="left:358px;top:185px;width:1561px;height:845px;background:#fff;border-left:2px solid #6E6E6E;border-top:2px solid #6E6E6E;border-right:1px solid #E0E0E0;border-bottom:1px solid #E0E0E0"></div>
<div class="abs" style="left:355px;top:1031px;width:1565px;height:3px;background:#F3F2F1"></div>
<div class="abs" style="left:358px;top:1034px;width:1562px;height:24.4px;background:#BBCDE6"></div>
<div class="abs" style="left:364px;top:1036.7px;width:159.4px;height:21.3px;background:#F1F6FD;border-radius:3px 3px 0 0;font-size:11px;line-height:20.8px;padding-left:30px">Load case combinations</div>
<svg class="abs" style="left:1886px;top:192px" width="28" height="28" viewBox="1886 192 28 28">
<rect x="1888.5" y="194.5" width="23" height="23" fill="#fff" stroke="#E2E2E2" stroke-width="1"/>
<path d="M1892.4 213.6l15.6-15.4" stroke="#F6B860" stroke-width="0.9"/>
<text x="1889.6" y="203.9" font-family="Liberation Sans, sans-serif" font-size="8.6" font-weight="bold" fill="#5A5A5A">2D</text>
<text x="1898.4" y="213.9" font-family="Liberation Sans, sans-serif" font-size="8.6" font-weight="bold" fill="#5A5A5A">3D</text></svg>
<svg class="abs" style="left:368px;top:1039px" width="18" height="16" viewBox="368 1039 18 16">
<rect x="369.5" y="1040.5" width="14.4" height="12.2" fill="#fff" stroke="#A9BCD8" stroke-width="0.8"/><rect x="369.4" y="1040.3" width="14.6" height="2.6" fill="#6E9EEA"/>
<path d="M369.6 1045.6h14.2M369.6 1048h14.2M369.6 1050.4h14.2M373.2 1043v9.6M376.8 1043v9.6M380.4 1043v9.6" stroke="#B9C7DC" stroke-width="0.7"/>
<path d="M369.6 1052.8h14.6v-12" fill="none" stroke="#3A4E78" stroke-width="1"/></svg>
<svg class="abs" style="left:1904px;top:1038px" width="14" height="14" viewBox="1904 1038 14 14"><path d="M1908 1041.8l7.2 7.4M1915.2 1041.8l-7.2 7.4" stroke="#000" stroke-width="1.7"/></svg>
<div class="abs" style="left:0;top:1057.8px;width:1920px;height:1px;background:#C9C9C9"></div>
<div class="abs" style="left:369px;top:194px;font-size:13px;letter-spacing:-0.26px;line-height:19px;color:#111;white-space:nowrap">DIN EN 1993:2015<br>S235,&nbsp; M12 - 4.6</div>
<div class="abs" style="left:369px;top:1006.7px;font-size:13.3px;line-height:16px;color:#111;white-space:nowrap">Connection type rigid</div>
<svg class="abs" style="left:0;top:0;will-change:transform" width="1920" height="1080" viewBox="0 0 1920 1080">
<rect x="717.5" y="386" width="852.6" height="28.9" fill="#AEC3E9"/>
<rect x="717.5" y="848.4" width="852.6" height="28.9" fill="#AEC3E9"/>
<rect x="616.3" y="414.9" width="520.2" height="433.5" fill="#AEC3E9"/>
<rect x="1151" y="414.9" width="520.2" height="433.5" fill="#AEC3E9"/>
<line x1="616.3" y1="418.1" x2="616.3" y2="848.4" stroke="#111" stroke-width="1.3" stroke-dasharray="10 10"/>
<line x1="1671.2" y1="418.1" x2="1671.2" y2="848.4" stroke="#111" stroke-width="1.3" stroke-dasharray="10 10"/>
<line x1="616.3" y1="481.3" x2="1136.5" y2="481.3" stroke="#111" stroke-width="1.15" stroke-dasharray="3 3"/>
<line x1="1151" y1="481.3" x2="1671.2" y2="481.3" stroke="#111" stroke-width="1.15" stroke-dasharray="3 3"/>
<line x1="616.3" y1="781.9" x2="1136.5" y2="781.9" stroke="#111" stroke-width="1.15" stroke-dasharray="3 3"/>
<line x1="1151" y1="781.9" x2="1671.2" y2="781.9" stroke="#111" stroke-width="1.15" stroke-dasharray="3 3"/>
<line x1="615.7" y1="631.6" x2="1671.8" y2="631.6" stroke="#222" stroke-width="1.1"/>
<line x1="616.6" y1="634.6" x2="1671.2" y2="634.6" stroke="#222" stroke-width="1.1" stroke-dasharray="10 10"/>
<line x1="801.8" y1="392.5" x2="801.8" y2="442.3" stroke="#222" stroke-width="1.1" stroke-dasharray="9.4 10.6"/>
<line x1="821" y1="392.5" x2="821" y2="442.3" stroke="#222" stroke-width="1.1" stroke-dasharray="9.4 10.6"/>
<line x1="811.4" y1="386" x2="811.4" y2="442.3" stroke="#222" stroke-width="1" stroke-dasharray="12 4 2 4"/>
<line x1="801.8" y1="870.8" x2="801.8" y2="820.9" stroke="#222" stroke-width="1.1" stroke-dasharray="9.4 10.6"/>
<line x1="821" y1="870.8" x2="821" y2="820.9" stroke="#222" stroke-width="1.1" stroke-dasharray="9.4 10.6"/>
<line x1="811.4" y1="877.2" x2="811.4" y2="820.9" stroke="#222" stroke-width="1" stroke-dasharray="12 4 2 4"/>
<line x1="917.4" y1="392.5" x2="917.4" y2="442.3" stroke="#222" stroke-width="1.1" stroke-dasharray="9.4 10.6"/>
<line x1="936.6" y1="392.5" x2="936.6" y2="442.3" stroke="#222" stroke-width="1.1" stroke-dasharray="9.4 10.6"/>
<line x1="927" y1="386" x2="927" y2="442.3" stroke="#222" stroke-width="1" stroke-dasharray="12 4 2 4"/>
<line x1="917.4" y1="870.8" x2="917.4" y2="820.9" stroke="#222" stroke-width="1.1" stroke-dasharray="9.4 10.6"/>
<line x1="936.6" y1="870.8" x2="936.6" y2="820.9" stroke="#222" stroke-width="1.1" stroke-dasharray="9.4 10.6"/>
<line x1="927" y1="877.2" x2="927" y2="820.9" stroke="#222" stroke-width="1" stroke-dasharray="12 4 2 4"/>
<line x1="1033" y1="392.5" x2="1033" y2="442.3" stroke="#222" stroke-width="1.1" stroke-dasharray="9.4 10.6"/>
<line x1="1052.2" y1="392.5" x2="1052.2" y2="442.3" stroke="#222" stroke-width="1.1" stroke-dasharray="9.4 10.6"/>
<line x1="1042.6" y1="386" x2="1042.6" y2="442.3" stroke="#222" stroke-width="1" stroke-dasharray="12 4 2 4"/>
<line x1="1033" y1="870.8" x2="1033" y2="820.9" stroke="#222" stroke-width="1.1" stroke-dasharray="9.4 10.6"/>
<line x1="1052.2" y1="870.8" x2="1052.2" y2="820.9" stroke="#222" stroke-width="1.1" stroke-dasharray="9.4 10.6"/>
<line x1="1042.6" y1="877.2" x2="1042.6" y2="820.9" stroke="#222" stroke-width="1" stroke-dasharray="12 4 2 4"/>
<line x1="1235.3" y1="392.5" x2="1235.3" y2="442.3" stroke="#222" stroke-width="1.1" stroke-dasharray="9.4 10.6"/>
<line x1="1254.5" y1="392.5" x2="1254.5" y2="442.3" stroke="#222" stroke-width="1.1" stroke-dasharray="9.4 10.6"/>
<line x1="1244.9" y1="386" x2="1244.9" y2="442.3" stroke="#222" stroke-width="1" stroke-dasharray="12 4 2 4"/>
<line x1="1235.3" y1="870.8" x2="1235.3" y2="820.9" stroke="#222" stroke-width="1.1" stroke-dasharray="9.4 10.6"/>
<line x1="1254.5" y1="870.8" x2="1254.5" y2="820.9" stroke="#222" stroke-width="1.1" stroke-dasharray="9.4 10.6"/>
<line x1="1244.9" y1="877.2" x2="1244.9" y2="820.9" stroke="#222" stroke-width="1" stroke-dasharray="12 4 2 4"/>
<line x1="1350.9" y1="392.5" x2="1350.9" y2="442.3" stroke="#222" stroke-width="1.1" stroke-dasharray="9.4 10.6"/>
<line x1="1370.1" y1="392.5" x2="1370.1" y2="442.3" stroke="#222" stroke-width="1.1" stroke-dasharray="9.4 10.6"/>
<line x1="1360.5" y1="386" x2="1360.5" y2="442.3" stroke="#222" stroke-width="1" stroke-dasharray="12 4 2 4"/>
<line x1="1350.9" y1="870.8" x2="1350.9" y2="820.9" stroke="#222" stroke-width="1.1" stroke-dasharray="9.4 10.6"/>
<line x1="1370.1" y1="870.8" x2="1370.1" y2="820.9" stroke="#222" stroke-width="1.1" stroke-dasharray="9.4 10.6"/>
<line x1="1360.5" y1="877.2" x2="1360.5" y2="820.9" stroke="#222" stroke-width="1" stroke-dasharray="12 4 2 4"/>
<line x1="1466.5" y1="392.5" x2="1466.5" y2="442.3" stroke="#222" stroke-width="1.1" stroke-dasharray="9.4 10.6"/>
<line x1="1485.7" y1="392.5" x2="1485.7" y2="442.3" stroke="#222" stroke-width="1.1" stroke-dasharray="9.4 10.6"/>
<line x1="1476.1" y1="386" x2="1476.1" y2="442.3" stroke="#222" stroke-width="1" stroke-dasharray="12 4 2 4"/>
<line x1="1466.5" y1="870.8" x2="1466.5" y2="820.9" stroke="#222" stroke-width="1.1" stroke-dasharray="9.4 10.6"/>
<line x1="1485.7" y1="870.8" x2="1485.7" y2="820.9" stroke="#222" stroke-width="1.1" stroke-dasharray="9.4 10.6"/>
<line x1="1476.1" y1="877.2" x2="1476.1" y2="820.9" stroke="#222" stroke-width="1" stroke-dasharray="12 4 2 4"/>
<path d="M616.3 414.9H1136.5M1151 414.9H1671.2M616.3 848.4H1136.5M1151 848.4H1671.2" stroke="#000" stroke-width="2" fill="none"/>
<path d="M616.3 442.3H1136.5M1151 442.3H1671.2M616.3 820.9H1136.5M1151 820.9H1671.2" stroke="#000" stroke-width="2" fill="none"/>
<path d="M1136.5 414.9V848.4M1151 414.9V848.4" stroke="#000" stroke-width="2" fill="none"/>
<path d="M717.5 414.9V386H1570V414.9M717.5 848.4V877.2H1570V848.4M1136.5 414.9H1151M1136.5 848.4H1151" stroke="#000" stroke-width="2" fill="none" stroke-linejoin="round"/>
<rect x="796.9" y="374.7" width="29" height="10.6" rx="1" fill="#A9A9A9" stroke="#222" stroke-width="1.1"/>
<path d="M804.4 374.7v10.6M818.4 374.7v10.6" stroke="#222" stroke-width="1.1"/>
<rect x="794.2" y="443.1" width="34.4" height="11.4" rx="1" fill="#A9A9A9" stroke="#222" stroke-width="1.1"/>
<rect x="796.9" y="454.5" width="29" height="17" rx="1" fill="#A9A9A9" stroke="#222" stroke-width="1.1"/>
<path d="M804.4 454.5v17M818.4 454.5v17" stroke="#222" stroke-width="1.1"/>
<rect x="802.6" y="471.5" width="17.6" height="8.6" rx="1" fill="#A9A9A9" stroke="#222" stroke-width="1.1"/>
<rect x="796.9" y="878.1" width="29" height="10.6" rx="1" fill="#A9A9A9" stroke="#222" stroke-width="1.1"/>
<path d="M804.4 878.1v10.6M818.4 878.1v10.6" stroke="#222" stroke-width="1.1"/>
<rect x="794.2" y="808.7" width="34.4" height="11.4" rx="1" fill="#A9A9A9" stroke="#222" stroke-width="1.1"/>
<rect x="796.9" y="791.7" width="29" height="17" rx="1" fill="#A9A9A9" stroke="#222" stroke-width="1.1"/>
<path d="M804.4 791.7v17M818.4 791.7v17" stroke="#222" stroke-width="1.1"/>
<rect x="802.6" y="783.1" width="17.6" height="8.6" rx="1" fill="#A9A9A9" stroke="#222" stroke-width="1.1"/>
<rect x="912.5" y="374.7" width="29" height="10.6" rx="1" fill="#A9A9A9" stroke="#222" stroke-width="1.1"/>
<path d="M920 374.7v10.6M934 374.7v10.6" stroke="#222" stroke-width="1.1"/>
<rect x="909.8" y="443.1" width="34.4" height="11.4" rx="1" fill="#A9A9A9" stroke="#222" stroke-width="1.1"/>
<rect x="912.5" y="454.5" width="29" height="17" rx="1" fill="#A9A9A9" stroke="#222" stroke-width="1.1"/>
<path d="M920 454.5v17M934 454.5v17" stroke="#222" stroke-width="1.1"/>
<rect x="918.2" y="471.5" width="17.6" height="8.6" rx="1" fill="#A9A9A9" stroke="#222" stroke-width="1.1"/>
<rect x="912.5" y="878.1" width="29" height="10.6" rx="1" fill="#A9A9A9" stroke="#222" stroke-width="1.1"/>
<path d="M920 878.1v10.6M934 878.1v10.6" stroke="#222" stroke-width="1.1"/>
<rect x="909.8" y="808.7" width="34.4" height="11.4" rx="1" fill="#A9A9A9" stroke="#222" stroke-width="1.1"/>
<rect x="912.5" y="791.7" width="29" height="17" rx="1" fill="#A9A9A9" stroke="#222" stroke-width="1.1"/>
<path d="M920 791.7v17M934 791.7v17" stroke="#222" stroke-width="1.1"/>
<rect x="918.2" y="783.1" width="17.6" height="8.6" rx="1" fill="#A9A9A9" stroke="#222" stroke-width="1.1"/>
<rect x="1028.1" y="374.7" width="29" height="10.6" rx="1" fill="#A9A9A9" stroke="#222" stroke-width="1.1"/>
<path d="M1035.6 374.7v10.6M1049.6 374.7v10.6" stroke="#222" stroke-width="1.1"/>
<rect x="1025.4" y="443.1" width="34.4" height="11.4" rx="1" fill="#A9A9A9" stroke="#222" stroke-width="1.1"/>
<rect x="1028.1" y="454.5" width="29" height="17" rx="1" fill="#A9A9A9" stroke="#222" stroke-width="1.1"/>
<path d="M1035.6 454.5v17M1049.6 454.5v17" stroke="#222" stroke-width="1.1"/>
<rect x="1033.8" y="471.5" width="17.6" height="8.6" rx="1" fill="#A9A9A9" stroke="#222" stroke-width="1.1"/>
<rect x="1028.1" y="878.1" width="29" height="10.6" rx="1" fill="#A9A9A9" stroke="#222" stroke-width="1.1"/>
<path d="M1035.6 878.1v10.6M1049.6 878.1v10.6" stroke="#222" stroke-width="1.1"/>
<rect x="1025.4" y="808.7" width="34.4" height="11.4" rx="1" fill="#A9A9A9" stroke="#222" stroke-width="1.1"/>
<rect x="1028.1" y="791.7" width="29" height="17" rx="1" fill="#A9A9A9" stroke="#222" stroke-width="1.1"/>
<path d="M1035.6 791.7v17M1049.6 791.7v17" stroke="#222" stroke-width="1.1"/>
<rect x="1033.8" y="783.1" width="17.6" height="8.6" rx="1" fill="#A9A9A9" stroke="#222" stroke-width="1.1"/>
<rect x="1230.4" y="374.7" width="29" height="10.6" rx="1" fill="#A9A9A9" stroke="#222" stroke-width="1.1"/>
<path d="M1237.9 374.7v10.6M1251.9 374.7v10.6" stroke="#222" stroke-width="1.1"/>
<rect x="1227.7" y="443.1" width="34.4" height="11.4" rx="1" fill="#A9A9A9" stroke="#222" stroke-width="1.1"/>
<rect x="1230.4" y="454.5" width="29" height="17" rx="1" fill="#A9A9A9" stroke="#222" stroke-width="1.1"/>
<path d="M1237.9 454.5v17M1251.9 454.5v17" stroke="#222" stroke-width="1.1"/>
<rect x="1236.1" y="471.5" width="17.6" height="8.6" rx="1" fill="#A9A9A9" stroke="#222" stroke-width="1.1"/>
<rect x="1230.4" y="878.1" width="29" height="10.6" rx="1" fill="#A9A9A9" stroke="#222" stroke-width="1.1"/>
<path d="M1237.9 878.1v10.6M1251.9 878.1v10.6" stroke="#222" stroke-width="1.1"/>
<rect x="1227.7" y="808.7" width="34.4" height="11.4" rx="1" fill="#A9A9A9" stroke="#222" stroke-width="1.1"/>
<rect x="1230.4" y="791.7" width="29" height="17" rx="1" fill="#A9A9A9" stroke="#222" stroke-width="1.1"/>
<path d="M1237.9 791.7v17M1251.9 791.7v17" stroke="#222" stroke-width="1.1"/>
<rect x="1236.1" y="783.1" width="17.6" height="8.6" rx="1" fill="#A9A9A9" stroke="#222" stroke-width="1.1"/>
<rect x="1346" y="374.7" width="29" height="10.6" rx="1" fill="#A9A9A9" stroke="#222" stroke-width="1.1"/>
<path d="M1353.5 374.7v10.6M1367.5 374.7v10.6" stroke="#222" stroke-width="1.1"/>
<rect x="1343.3" y="443.1" width="34.4" height="11.4" rx="1" fill="#A9A9A9" stroke="#222" stroke-width="1.1"/>
<rect x="1346" y="454.5" width="29" height="17" rx="1" fill="#A9A9A9" stroke="#222" stroke-width="1.1"/>
<path d="M1353.5 454.5v17M1367.5 454.5v17" stroke="#222" stroke-width="1.1"/>
<rect x="1351.7" y="471.5" width="17.6" height="8.6" rx="1" fill="#A9A9A9" stroke="#222" stroke-width="1.1"/>
<rect x="1346" y="878.1" width="29" height="10.6" rx="1" fill="#A9A9A9" stroke="#222" stroke-width="1.1"/>
<path d="M1353.5 878.1v10.6M1367.5 878.1v10.6" stroke="#222" stroke-width="1.1"/>
<rect x="1343.3" y="808.7" width="34.4" height="11.4" rx="1" fill="#A9A9A9" stroke="#222" stroke-width="1.1"/>
<rect x="1346" y="791.7" width="29" height="17" rx="1" fill="#A9A9A9" stroke="#222" stroke-width="1.1"/>
<path d="M1353.5 791.7v17M1367.5 791.7v17" stroke="#222" stroke-width="1.1"/>
<rect x="1351.7" y="783.1" width="17.6" height="8.6" rx="1" fill="#A9A9A9" stroke="#222" stroke-width="1.1"/>
<rect x="1461.6" y="374.7" width="29" height="10.6" rx="1" fill="#A9A9A9" stroke="#222" stroke-width="1.1"/>
<path d="M1469.1 374.7v10.6M1483.1 374.7v10.6" stroke="#222" stroke-width="1.1"/>
<rect x="1458.9" y="443.1" width="34.4" height="11.4" rx="1" fill="#A9A9A9" stroke="#222" stroke-width="1.1"/>
<rect x="1461.6" y="454.5" width="29" height="17" rx="1" fill="#A9A9A9" stroke="#222" stroke-width="1.1"/>
<path d="M1469.1 454.5v17M1483.1 454.5v17" stroke="#222" stroke-width="1.1"/>
<rect x="1467.3" y="471.5" width="17.6" height="8.6" rx="1" fill="#A9A9A9" stroke="#222" stroke-width="1.1"/>
<rect x="1461.6" y="878.1" width="29" height="10.6" rx="1" fill="#A9A9A9" stroke="#222" stroke-width="1.1"/>
<path d="M1469.1 878.1v10.6M1483.1 878.1v10.6" stroke="#222" stroke-width="1.1"/>
<rect x="1458.9" y="808.7" width="34.4" height="11.4" rx="1" fill="#A9A9A9" stroke="#222" stroke-width="1.1"/>
<rect x="1461.6" y="791.7" width="29" height="17" rx="1" fill="#A9A9A9" stroke="#222" stroke-width="1.1"/>
<path d="M1469.1 791.7v17M1483.1 791.7v17" stroke="#222" stroke-width="1.1"/>
<rect x="1467.3" y="783.1" width="17.6" height="8.6" rx="1" fill="#A9A9A9" stroke="#222" stroke-width="1.1"/>
<rect x="948.7" y="537.7" width="390.2" height="187.8" fill="#AEC3E9"/>
<line x1="948.7" y1="631.6" x2="1338.8" y2="631.6" stroke="#222" stroke-width="1.1"/>
<line x1="616.6" y1="634.6" x2="1671.2" y2="634.6" stroke="#222" stroke-width="1.1" stroke-dasharray="10 10"/>
<rect x="948.7" y="537.7" width="390.2" height="187.8" rx="1.5" stroke="#000" stroke-width="2" fill="none"/>
<rect x="1136.7" y="629.6" width="14" height="7" fill="#AEC3E9"/>
<circle cx="1143.2" cy="631.6" r="4.5" fill="#AEC3E9"/>
<circle cx="1143.2" cy="631.6" r="3.1" fill="#fff" stroke="#9A9A1E" stroke-width="1.2"/>
<circle cx="1006.5" cy="595.5" r="17.4" fill="none" stroke="#222" stroke-width="1.2" stroke-dasharray="1.6 2.4"/>
<polygon points="1006.5,581.1 1018.9,588.3 1018.9,602.7 1006.5,609.9 994,602.7 994,588.3" fill="#A9A9A9" stroke="#333" stroke-width="1.2"/>
<circle cx="1006.5" cy="595.5" r="10" fill="#DCDCDC" stroke="#1a1a1a" stroke-width="1.8" stroke-dasharray="1.1 0.8"/>
<circle cx="1006.5" cy="595.5" r="9.3" fill="#DCDCDC" stroke="#222" stroke-width="1.1"/>
<path d="M1006.5 586.5V596H1015.5" fill="none" stroke="#111" stroke-width="1.2"/>
<path d="M1000 595.5h2.4M1006.5 600v2.4" stroke="#111" stroke-width="1"/>
<circle cx="1006.5" cy="667.7" r="17.4" fill="none" stroke="#222" stroke-width="1.2" stroke-dasharray="1.6 2.4"/>
<polygon points="1006.5,653.3 1018.9,660.5 1018.9,674.9 1006.5,682.1 994,674.9 994,660.5" fill="#A9A9A9" stroke="#333" stroke-width="1.2"/>
<circle cx="1006.5" cy="667.7" r="10" fill="#DCDCDC" stroke="#1a1a1a" stroke-width="1.8" stroke-dasharray="1.1 0.8"/>
<circle cx="1006.5" cy="667.7" r="9.3" fill="#DCDCDC" stroke="#222" stroke-width="1.1"/>
<path d="M1006.5 658.7V668.2H1015.5" fill="none" stroke="#111" stroke-width="1.2"/>
<path d="M1000 667.7h2.4M1006.5 672.2v2.4" stroke="#111" stroke-width="1"/>
<circle cx="1078.7" cy="595.5" r="17.4" fill="none" stroke="#222" stroke-width="1.2" stroke-dasharray="1.6 2.4"/>
<polygon points="1078.7,581.1 1091.2,588.3 1091.2,602.7 1078.7,609.9 1066.3,602.7 1066.3,588.3" fill="#A9A9A9" stroke="#333" stroke-width="1.2"/>
<circle cx="1078.7" cy="595.5" r="10" fill="#DCDCDC" stroke="#1a1a1a" stroke-width="1.8" stroke-dasharray="1.1 0.8"/>
<circle cx="1078.7" cy="595.5" r="9.3" fill="#DCDCDC" stroke="#222" stroke-width="1.1"/>
<path d="M1078.7 586.5V596H1087.7" fill="none" stroke="#111" stroke-width="1.2"/>
<path d="M1072.2 595.5h2.4M1078.7 600v2.4" stroke="#111" stroke-width="1"/>
<circle cx="1078.7" cy="667.7" r="17.4" fill="none" stroke="#222" stroke-width="1.2" stroke-dasharray="1.6 2.4"/>
<polygon points="1078.7,653.3 1091.2,660.5 1091.2,674.9 1078.7,682.1 1066.3,674.9 1066.3,660.5" fill="#A9A9A9" stroke="#333" stroke-width="1.2"/>
<circle cx="1078.7" cy="667.7" r="10" fill="#DCDCDC" stroke="#1a1a1a" stroke-width="1.8" stroke-dasharray="1.1 0.8"/>
<circle cx="1078.7" cy="667.7" r="9.3" fill="#DCDCDC" stroke="#222" stroke-width="1.1"/>
<path d="M1078.7 658.7V668.2H1087.7" fill="none" stroke="#111" stroke-width="1.2"/>
<path d="M1072.2 667.7h2.4M1078.7 672.2v2.4" stroke="#111" stroke-width="1"/>
<circle cx="1208.8" cy="595.5" r="17.4" fill="none" stroke="#222" stroke-width="1.2" stroke-dasharray="1.6 2.4"/>
<polygon points="1208.8,581.1 1221.2,588.3 1221.2,602.7 1208.8,609.9 1196.3,602.7 1196.3,588.3" fill="#A9A9A9" stroke="#333" stroke-width="1.2"/>
<circle cx="1208.8" cy="595.5" r="10" fill="#DCDCDC" stroke="#1a1a1a" stroke-width="1.8" stroke-dasharray="1.1 0.8"/>
<circle cx="1208.8" cy="595.5" r="9.3" fill="#DCDCDC" stroke="#222" stroke-width="1.1"/>
<path d="M1208.8 586.5V596H1217.8" fill="none" stroke="#111" stroke-width="1.2"/>
<path d="M1202.3 595.5h2.4M1208.8 600v2.4" stroke="#111" stroke-width="1"/>
<circle cx="1208.8" cy="667.7" r="17.4" fill="none" stroke="#222" stroke-width="1.2" stroke-dasharray="1.6 2.4"/>
<polygon points="1208.8,653.3 1221.2,660.5 1221.2,674.9 1208.8,682.1 1196.3,674.9 1196.3,660.5" fill="#A9A9A9" stroke="#333" stroke-width="1.2"/>
<circle cx="1208.8" cy="667.7" r="10" fill="#DCDCDC" stroke="#1a1a1a" stroke-width="1.8" stroke-dasharray="1.1 0.8"/>
<circle cx="1208.8" cy="667.7" r="9.3" fill="#DCDCDC" stroke="#222" stroke-width="1.1"/>
<path d="M1208.8 658.7V668.2H1217.8" fill="none" stroke="#111" stroke-width="1.2"/>
<path d="M1202.3 667.7h2.4M1208.8 672.2v2.4" stroke="#111" stroke-width="1"/>
<circle cx="1281" cy="595.5" r="17.4" fill="none" stroke="#222" stroke-width="1.2" stroke-dasharray="1.6 2.4"/>
<polygon points="1281,581.1 1293.5,588.3 1293.5,602.7 1281,609.9 1268.6,602.7 1268.6,588.3" fill="#A9A9A9" stroke="#333" stroke-width="1.2"/>
<circle cx="1281" cy="595.5" r="10" fill="#DCDCDC" stroke="#1a1a1a" stroke-width="1.8" stroke-dasharray="1.1 0.8"/>
<circle cx="1281" cy="595.5" r="9.3" fill="#DCDCDC" stroke="#222" stroke-width="1.1"/>
<path d="M1281 586.5V596H1290" fill="none" stroke="#111" stroke-width="1.2"/>
<path d="M1274.5 595.5h2.4M1281 600v2.4" stroke="#111" stroke-width="1"/>
<circle cx="1281" cy="667.7" r="17.4" fill="none" stroke="#222" stroke-width="1.2" stroke-dasharray="1.6 2.4"/>
<polygon points="1281,653.3 1293.5,660.5 1293.5,674.9 1281,682.1 1268.6,674.9 1268.6,660.5" fill="#A9A9A9" stroke="#333" stroke-width="1.2"/>
<circle cx="1281" cy="667.7" r="10" fill="#DCDCDC" stroke="#1a1a1a" stroke-width="1.8" stroke-dasharray="1.1 0.8"/>
<circle cx="1281" cy="667.7" r="9.3" fill="#DCDCDC" stroke="#222" stroke-width="1.1"/>
<path d="M1281 658.7V668.2H1290" fill="none" stroke="#111" stroke-width="1.2"/>
<path d="M1274.5 667.7h2.4M1281 672.2v2.4" stroke="#111" stroke-width="1"/>
<text x="1005.5" y="551.7" font-family="Liberation Sans, sans-serif" font-size="12.3" fill="#fff" text-anchor="middle">1</text>
<text x="1077.7" y="551.7" font-family="Liberation Sans, sans-serif" font-size="12.3" fill="#fff" text-anchor="middle">2</text>
<text x="1207.8" y="551.7" font-family="Liberation Sans, sans-serif" font-size="12.3" fill="#fff" text-anchor="middle">2</text>
<text x="1280" y="551.7" font-family="Liberation Sans, sans-serif" font-size="12.3" fill="#fff" text-anchor="middle">1</text>
<text x="952.5" y="600.7" font-family="Liberation Sans, sans-serif" font-size="12.3" fill="#fff" text-anchor="middle">1</text>
<text x="1334.8" y="600.7" font-family="Liberation Sans, sans-serif" font-size="12.3" fill="#fff" text-anchor="middle">1</text>
<text x="952.5" y="672.9" font-family="Liberation Sans, sans-serif" font-size="12.3" fill="#fff" text-anchor="middle">2</text>
<text x="1334.8" y="672.9" font-family="Liberation Sans, sans-serif" font-size="12.3" fill="#fff" text-anchor="middle">2</text>
<path d="M710.5 256.2H1577" stroke="#161616" stroke-width="1" fill="none"/>
<path d="M717.5 248.7V274.7" stroke="#161616" stroke-width="1" fill="none"/>
<path d="M715.2 258.5L719.8 253.9" stroke="#333" stroke-width="1"/>
<path d="M811.4 248.7V274.7" stroke="#161616" stroke-width="1" fill="none"/>
<path d="M809.1 258.5L813.7 253.9" stroke="#333" stroke-width="1"/>
<path d="M927 248.7V274.7" stroke="#161616" stroke-width="1" fill="none"/>
<path d="M924.7 258.5L929.3 253.9" stroke="#333" stroke-width="1"/>
<path d="M1042.6 248.7V274.7" stroke="#161616" stroke-width="1" fill="none"/>
<path d="M1040.3 258.5L1044.9 253.9" stroke="#333" stroke-width="1"/>
<path d="M1136.5 248.7V274.7" stroke="#161616" stroke-width="1" fill="none"/>
<path d="M1134.2 258.5L1138.8 253.9" stroke="#333" stroke-width="1"/>
<path d="M1151 248.7V274.7" stroke="#161616" stroke-width="1" fill="none"/>
<path d="M1148.7 258.5L1153.3 253.9" stroke="#333" stroke-width="1"/>
<path d="M1244.9 248.7V274.7" stroke="#161616" stroke-width="1" fill="none"/>
<path d="M1242.6 258.5L1247.2 253.9" stroke="#333" stroke-width="1"/>
<path d="M1360.5 248.7V274.7" stroke="#161616" stroke-width="1" fill="none"/>
<path d="M1358.2 258.5L1362.8 253.9" stroke="#333" stroke-width="1"/>
<path d="M1476.1 248.7V274.7" stroke="#161616" stroke-width="1" fill="none"/>
<path d="M1473.8 258.5L1478.4 253.9" stroke="#333" stroke-width="1"/>
<path d="M1570 248.7V274.7" stroke="#161616" stroke-width="1" fill="none"/>
<path d="M1567.7 258.5L1572.3 253.9" stroke="#333" stroke-width="1"/>
<text x="764.4" y="251.7" font-family="Liberation Sans, sans-serif" font-size="12" fill="#1a1a1a" text-anchor="middle">65</text>
<text x="869.2" y="251.7" font-family="Liberation Sans, sans-serif" font-size="12" fill="#1a1a1a" text-anchor="middle">80</text>
<text x="984.8" y="251.7" font-family="Liberation Sans, sans-serif" font-size="12" fill="#1a1a1a" text-anchor="middle">80</text>
<text x="1089.6" y="251.7" font-family="Liberation Sans, sans-serif" font-size="12" fill="#1a1a1a" text-anchor="middle">65</text>
<text x="1197.9" y="251.7" font-family="Liberation Sans, sans-serif" font-size="12" fill="#1a1a1a" text-anchor="middle">65</text>
<text x="1302.7" y="251.7" font-family="Liberation Sans, sans-serif" font-size="12" fill="#1a1a1a" text-anchor="middle">80</text>
<text x="1418.3" y="251.7" font-family="Liberation Sans, sans-serif" font-size="12" fill="#1a1a1a" text-anchor="middle">80</text>
<text x="1523.1" y="251.7" font-family="Liberation Sans, sans-serif" font-size="12" fill="#1a1a1a" text-anchor="middle">65</text>
<path d="M941.7 294.5H1345.8" stroke="#161616" stroke-width="1" fill="none"/>
<path d="M948.7 287.8V363.6M1338.8 287.8V363.6" stroke="#161616" stroke-width="1" fill="none"/>
<path d="M946.4 296.8L951 292.2" stroke="#333" stroke-width="1"/>
<path d="M1336.5 296.8L1341.1 292.2" stroke="#333" stroke-width="1"/>
<text x="1143.8" y="290.2" font-family="Liberation Sans, sans-serif" font-size="12" fill="#1a1a1a" text-anchor="middle">270</text>
<path d="M941.7 320.1H1345.8" stroke="#161616" stroke-width="1" fill="none"/>
<path d="M946.4 322.4L951 317.8" stroke="#333" stroke-width="1"/>
<path d="M1134.2 322.4L1138.8 317.8" stroke="#333" stroke-width="1"/>
<path d="M1148.7 322.4L1153.3 317.8" stroke="#333" stroke-width="1"/>
<path d="M1336.5 322.4L1341.1 317.8" stroke="#333" stroke-width="1"/>
<path d="M1136.5 313V363.6M1151 313V363.6" stroke="#161616" stroke-width="1" fill="none"/>
<text x="1042.6" y="316" font-family="Liberation Sans, sans-serif" font-size="12" fill="#1a1a1a" text-anchor="middle">130</text>
<text x="1143.8" y="316" font-family="Liberation Sans, sans-serif" font-size="12" fill="#1a1a1a" text-anchor="middle">10</text>
<text x="1244.9" y="316" font-family="Liberation Sans, sans-serif" font-size="12" fill="#1a1a1a" text-anchor="middle">130</text>
<path d="M941.7 345.3H1345.8" stroke="#161616" stroke-width="1" fill="none"/>
<path d="M946.4 347.6L951 343" stroke="#333" stroke-width="1"/>
<path d="M1004.2 347.6L1008.8 343" stroke="#333" stroke-width="1"/>
<path d="M1076.4 347.6L1081 343" stroke="#333" stroke-width="1"/>
<path d="M1134.2 347.6L1138.8 343" stroke="#333" stroke-width="1"/>
<path d="M1148.7 347.6L1153.3 343" stroke="#333" stroke-width="1"/>
<path d="M1206.5 347.6L1211.1 343" stroke="#333" stroke-width="1"/>
<path d="M1278.7 347.6L1283.3 343" stroke="#333" stroke-width="1"/>
<path d="M1336.5 347.6L1341.1 343" stroke="#333" stroke-width="1"/>
<path d="M1006.5 338.5V363.6" stroke="#161616" stroke-width="1" fill="none"/>
<path d="M1078.7 338.5V363.6" stroke="#161616" stroke-width="1" fill="none"/>
<path d="M1208.8 338.5V363.6" stroke="#161616" stroke-width="1" fill="none"/>
<path d="M1281 338.5V363.6" stroke="#161616" stroke-width="1" fill="none"/>
<text x="977.6" y="340.9" font-family="Liberation Sans, sans-serif" font-size="12" fill="#1a1a1a" text-anchor="middle">40</text>
<text x="1042.6" y="340.9" font-family="Liberation Sans, sans-serif" font-size="12" fill="#1a1a1a" text-anchor="middle">50</text>
<text x="1107.6" y="340.9" font-family="Liberation Sans, sans-serif" font-size="12" fill="#1a1a1a" text-anchor="middle">40</text>
<text x="1179.9" y="340.9" font-family="Liberation Sans, sans-serif" font-size="12" fill="#1a1a1a" text-anchor="middle">40</text>
<text x="1244.9" y="340.9" font-family="Liberation Sans, sans-serif" font-size="12" fill="#1a1a1a" text-anchor="middle">50</text>
<text x="1309.9" y="340.9" font-family="Liberation Sans, sans-serif" font-size="12" fill="#1a1a1a" text-anchor="middle">40</text>
<path d="M710.5 918.2H1577" stroke="#161616" stroke-width="1" fill="none"/>
<path d="M717.5 899.2V924.7" stroke="#161616" stroke-width="1" fill="none"/>
<path d="M715.2 920.5L719.8 915.9" stroke="#333" stroke-width="1"/>
<path d="M811.4 899.2V924.7" stroke="#161616" stroke-width="1" fill="none"/>
<path d="M809.1 920.5L813.7 915.9" stroke="#333" stroke-width="1"/>
<path d="M927 899.2V924.7" stroke="#161616" stroke-width="1" fill="none"/>
<path d="M924.7 920.5L929.3 915.9" stroke="#333" stroke-width="1"/>
<path d="M1042.6 899.2V924.7" stroke="#161616" stroke-width="1" fill="none"/>
<path d="M1040.3 920.5L1044.9 915.9" stroke="#333" stroke-width="1"/>
<path d="M1136.5 899.2V924.7" stroke="#161616" stroke-width="1" fill="none"/>
<path d="M1134.2 920.5L1138.8 915.9" stroke="#333" stroke-width="1"/>
<path d="M1151 899.2V924.7" stroke="#161616" stroke-width="1" fill="none"/>
<path d="M1148.7 920.5L1153.3 915.9" stroke="#333" stroke-width="1"/>
<path d="M1244.9 899.2V924.7" stroke="#161616" stroke-width="1" fill="none"/>
<path d="M1242.6 920.5L1247.2 915.9" stroke="#333" stroke-width="1"/>
<path d="M1360.5 899.2V924.7" stroke="#161616" stroke-width="1" fill="none"/>
<path d="M1358.2 920.5L1362.8 915.9" stroke="#333" stroke-width="1"/>
<path d="M1476.1 899.2V924.7" stroke="#161616" stroke-width="1" fill="none"/>
<path d="M1473.8 920.5L1478.4 915.9" stroke="#333" stroke-width="1"/>
<path d="M1570 899.2V924.7" stroke="#161616" stroke-width="1" fill="none"/>
<path d="M1567.7 920.5L1572.3 915.9" stroke="#333" stroke-width="1"/>
<text x="764.4" y="913.7" font-family="Liberation Sans, sans-serif" font-size="12" fill="#1a1a1a" text-anchor="middle">65</text>
<text x="869.2" y="913.7" font-family="Liberation Sans, sans-serif" font-size="12" fill="#1a1a1a" text-anchor="middle">80</text>
<text x="984.8" y="913.7" font-family="Liberation Sans, sans-serif" font-size="12" fill="#1a1a1a" text-anchor="middle">80</text>
<text x="1089.6" y="913.7" font-family="Liberation Sans, sans-serif" font-size="12" fill="#1a1a1a" text-anchor="middle">65</text>
<text x="1197.9" y="913.7" font-family="Liberation Sans, sans-serif" font-size="12" fill="#1a1a1a" text-anchor="middle">65</text>
<text x="1302.7" y="913.7" font-family="Liberation Sans, sans-serif" font-size="12" fill="#1a1a1a" text-anchor="middle">80</text>
<text x="1418.3" y="913.7" font-family="Liberation Sans, sans-serif" font-size="12" fill="#1a1a1a" text-anchor="middle">80</text>
<text x="1523.1" y="913.7" font-family="Liberation Sans, sans-serif" font-size="12" fill="#1a1a1a" text-anchor="middle">65</text>
<path d="M710.5 943.3H1577" stroke="#161616" stroke-width="1" fill="none"/>
<path d="M715.2 945.6L719.8 941" stroke="#333" stroke-width="1"/>
<path d="M1134.2 945.6L1138.8 941" stroke="#333" stroke-width="1"/>
<path d="M1148.7 945.6L1153.3 941" stroke="#333" stroke-width="1"/>
<path d="M1567.7 945.6L1572.3 941" stroke="#333" stroke-width="1"/>
<text x="927" y="939" font-family="Liberation Sans, sans-serif" font-size="12" fill="#1a1a1a" text-anchor="middle">290</text>
<text x="1143.8" y="939" font-family="Liberation Sans, sans-serif" font-size="12" fill="#1a1a1a" text-anchor="middle">10</text>
<text x="1360.5" y="939" font-family="Liberation Sans, sans-serif" font-size="12" fill="#1a1a1a" text-anchor="middle">290</text>
<path d="M1136.5 924.6V950M1151 924.6V950" stroke="#161616" stroke-width="1" fill="none"/>
<path d="M710.5 969.3H1577" stroke="#161616" stroke-width="1" fill="none"/>
<path d="M717.5 924.6V975.7M1570 924.6V975.7" stroke="#161616" stroke-width="1" fill="none"/>
<path d="M715.2 971.6L719.8 967" stroke="#333" stroke-width="1"/>
<path d="M1567.7 971.6L1572.3 967" stroke="#333" stroke-width="1"/>
<text x="1143.8" y="965" font-family="Liberation Sans, sans-serif" font-size="12" fill="#1a1a1a" text-anchor="middle">590</text>
<path d="M537.3 407.9V855.4" stroke="#161616" stroke-width="1" fill="none"/>
<path d="M563 530.7V732.5" stroke="#161616" stroke-width="1" fill="none"/>
<path d="M530.3 414.9H555.8" stroke="#161616" stroke-width="1" fill="none"/>
<path d="M535 417.2L539.6 412.6" stroke="#333" stroke-width="1"/>
<path d="M530.3 848.4H555.8" stroke="#161616" stroke-width="1" fill="none"/>
<path d="M535 850.6L539.6 846.1" stroke="#333" stroke-width="1"/>
<path d="M530.3 537.7H581.5" stroke="#161616" stroke-width="1" fill="none"/>
<path d="M535 540L539.6 535.4" stroke="#333" stroke-width="1"/>
<path d="M560.7 540L565.3 535.4" stroke="#333" stroke-width="1"/>
<path d="M530.3 725.5H581.5" stroke="#161616" stroke-width="1" fill="none"/>
<path d="M535 727.8L539.6 723.2" stroke="#333" stroke-width="1"/>
<path d="M560.7 727.8L565.3 723.2" stroke="#333" stroke-width="1"/>
<path d="M556 595.5H581.5" stroke="#161616" stroke-width="1" fill="none"/>
<path d="M560.7 597.8L565.3 593.2" stroke="#333" stroke-width="1"/>
<path d="M556 667.7H581.5" stroke="#161616" stroke-width="1" fill="none"/>
<path d="M560.7 670L565.3 665.4" stroke="#333" stroke-width="1"/>
<text transform="translate(533.3 476.3) rotate(-90)" font-family="Liberation Sans, sans-serif" font-size="12" fill="#1a1a1a" text-anchor="middle">85</text>
<text transform="translate(533.3 631.6) rotate(-90)" font-family="Liberation Sans, sans-serif" font-size="12" fill="#1a1a1a" text-anchor="middle">130</text>
<text transform="translate(533.3 786.9) rotate(-90)" font-family="Liberation Sans, sans-serif" font-size="12" fill="#1a1a1a" text-anchor="middle">85</text>
<text transform="translate(559 566.6) rotate(-90)" font-family="Liberation Sans, sans-serif" font-size="12" fill="#1a1a1a" text-anchor="middle">40</text>
<text transform="translate(559 631.6) rotate(-90)" font-family="Liberation Sans, sans-serif" font-size="12" fill="#1a1a1a" text-anchor="middle">50</text>
<text transform="translate(559 696.6) rotate(-90)" font-family="Liberation Sans, sans-serif" font-size="12" fill="#1a1a1a" text-anchor="middle">40</text>
<text transform="translate(612.7 632.1) rotate(-90)" font-family="Liberation Sans, sans-serif" font-size="12" fill="#1a1a1a" text-anchor="middle">HEB 300 - S235</text>
<path d="M1749.8 407.9V855.4" stroke="#161616" stroke-width="1" fill="none"/>
<path d="M1724.8 530.7V732.5" stroke="#161616" stroke-width="1" fill="none"/>
<path d="M1731.3 414.9H1756.8" stroke="#161616" stroke-width="1" fill="none"/>
<path d="M1747.5 417.2L1752.1 412.6" stroke="#333" stroke-width="1"/>
<path d="M1731.3 848.4H1756.8" stroke="#161616" stroke-width="1" fill="none"/>
<path d="M1747.5 850.6L1752.1 846.1" stroke="#333" stroke-width="1"/>
<path d="M1706.3 537.7H1756.8" stroke="#161616" stroke-width="1" fill="none"/>
<path d="M1747.5 540L1752.1 535.4" stroke="#333" stroke-width="1"/>
<path d="M1722.5 540L1727.1 535.4" stroke="#333" stroke-width="1"/>
<path d="M1706.3 725.5H1756.8" stroke="#161616" stroke-width="1" fill="none"/>
<path d="M1747.5 727.8L1752.1 723.2" stroke="#333" stroke-width="1"/>
<path d="M1722.5 727.8L1727.1 723.2" stroke="#333" stroke-width="1"/>
<path d="M1706.3 595.5H1731.8" stroke="#161616" stroke-width="1" fill="none"/>
<path d="M1722.5 597.8L1727.1 593.2" stroke="#333" stroke-width="1"/>
<path d="M1706.3 667.7H1731.8" stroke="#161616" stroke-width="1" fill="none"/>
<path d="M1722.5 670L1727.1 665.4" stroke="#333" stroke-width="1"/>
<text transform="translate(1745.8 476.3) rotate(-90)" font-family="Liberation Sans, sans-serif" font-size="12" fill="#1a1a1a" text-anchor="middle">85</text>
<text transform="translate(1745.8 631.6) rotate(-90)" font-family="Liberation Sans, sans-serif" font-size="12" fill="#1a1a1a" text-anchor="middle">130</text>
<text transform="translate(1745.8 786.9) rotate(-90)" font-family="Liberation Sans, sans-serif" font-size="12" fill="#1a1a1a" text-anchor="middle">85</text>
<text transform="translate(1720.8 566.6) rotate(-90)" font-family="Liberation Sans, sans-serif" font-size="12" fill="#1a1a1a" text-anchor="middle">40</text>
<text transform="translate(1720.8 631.6) rotate(-90)" font-family="Liberation Sans, sans-serif" font-size="12" fill="#1a1a1a" text-anchor="middle">50</text>
<text transform="translate(1720.8 696.6) rotate(-90)" font-family="Liberation Sans, sans-serif" font-size="12" fill="#1a1a1a" text-anchor="middle">40</text>
<text transform="translate(1684.4 632.1) rotate(-90)" font-family="Liberation Sans, sans-serif" font-size="12" fill="#1a1a1a" text-anchor="middle">HEB 300 - S235</text>
</svg>
</body></html>
